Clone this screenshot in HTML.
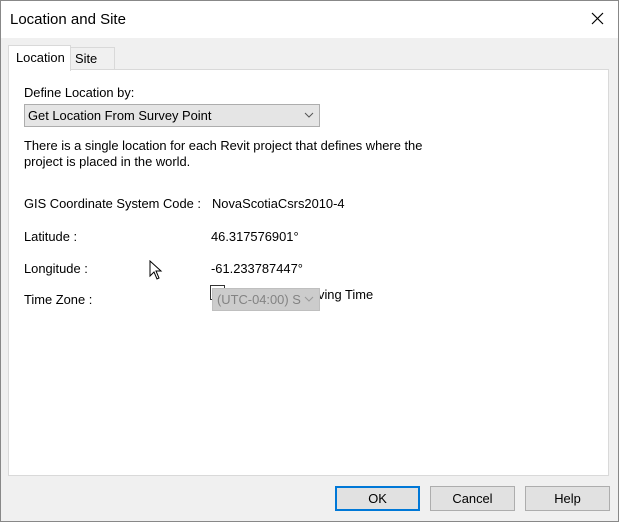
<!DOCTYPE html><html><head><style>
body{margin:0;width:619px;height:522px;overflow:hidden;font-family:"Liberation Sans",sans-serif;font-size:12.9px;color:#000;background:#f0f0f0;position:relative}
.frame{position:absolute;left:0;top:0;width:617px;height:520px;border:1px solid #888}
.title{position:absolute;left:1px;top:1px;width:617px;height:37px;background:#fff}
.t{position:absolute;white-space:nowrap}
.panel{position:absolute;left:8px;top:69px;width:599px;height:405px;background:#fff;border:1px solid #d9d9d9}
.btn{position:absolute;top:486px;width:83px;height:23px;border:1px solid #adadad;background:#e1e1e1;text-align:center;line-height:23px}
</style></head><body>
<div class="title"><div class="t" style="left:9px;top:10px;font-size:15px">Location and Site</div>
<svg style="position:absolute;left:590px;top:11px" width="13" height="13"><path d="M1 1L12 12M12 1L1 12" stroke="#000" stroke-width="1.2"/></svg></div>
<div class="panel"></div>
<div style="position:absolute;left:70px;top:47px;width:43px;height:21px;border:1px solid #d9d9d9;border-bottom:none;background:#f0f0f0"></div>
<div class="t" style="left:75px;top:51px">Site</div>
<div style="position:absolute;left:8px;top:45px;width:61px;height:25px;border:1px solid #d9d9d9;border-bottom:none;background:#fff"></div>
<div class="t" style="left:16px;top:50px">Location</div>
<div class="t" style="left:24px;top:85px">Define Location by:</div>
<div style="position:absolute;left:24px;top:104px;width:294px;height:21px;border:1px solid #adadad;background:#e5e5e5"></div>
<div class="t" style="left:28px;top:108px">Get Location From Survey Point</div>
<svg style="position:absolute;left:304px;top:112px" width="10" height="6"><path d="M1 1L5 5L9 1" stroke="#555" fill="none"/></svg>
<div class="t" style="left:24px;top:138px;line-height:16px">There is a single location for each Revit project that defines where the<br>project is placed in the world.</div>
<div class="t" style="left:24px;top:196px">GIS Coordinate System Code :</div>
<div class="t" style="left:212px;top:196px">NovaScotiaCsrs2010-4</div>
<div class="t" style="left:24px;top:229px">Latitude :</div>
<div class="t" style="left:211px;top:229px">46.317576901°</div>
<div class="t" style="left:24px;top:261px">Longitude :</div>
<div class="t" style="left:211px;top:261px">-61.233787447°</div>
<div class="t" style="left:24px;top:292px">Time Zone :</div>
<div style="position:absolute;left:210px;top:285px;width:13px;height:13px;border:1px solid #333;background:#fff"></div>
<div class="t" style="left:318px;top:287px">ving Time</div>
<div style="position:absolute;left:212px;top:288px;width:106px;height:21px;border:1px solid #bfbfbf;background:#ccc;color:#838383;overflow:hidden"><span style="position:absolute;left:4px;top:3px;white-space:nowrap">(UTC-04:00) S</span></div>
<svg style="position:absolute;left:304px;top:296px" width="10" height="6"><path d="M1 1L5 5L9 1" stroke="#999" fill="none"/></svg>
<svg style="position:absolute;left:149px;top:260px" width="14" height="20"><path d="M1 1L1 16L5 12L8 19L10 18L7 11L12 11Z" fill="#fff" stroke="#000"/></svg>
<div class="btn" style="left:335px;border:2px solid #0078d7;width:81px;height:21px;line-height:21px">OK</div>
<div class="btn" style="left:430px">Cancel</div>
<div class="btn" style="left:525px">Help</div>
<div class="frame"></div>
</body></html>
